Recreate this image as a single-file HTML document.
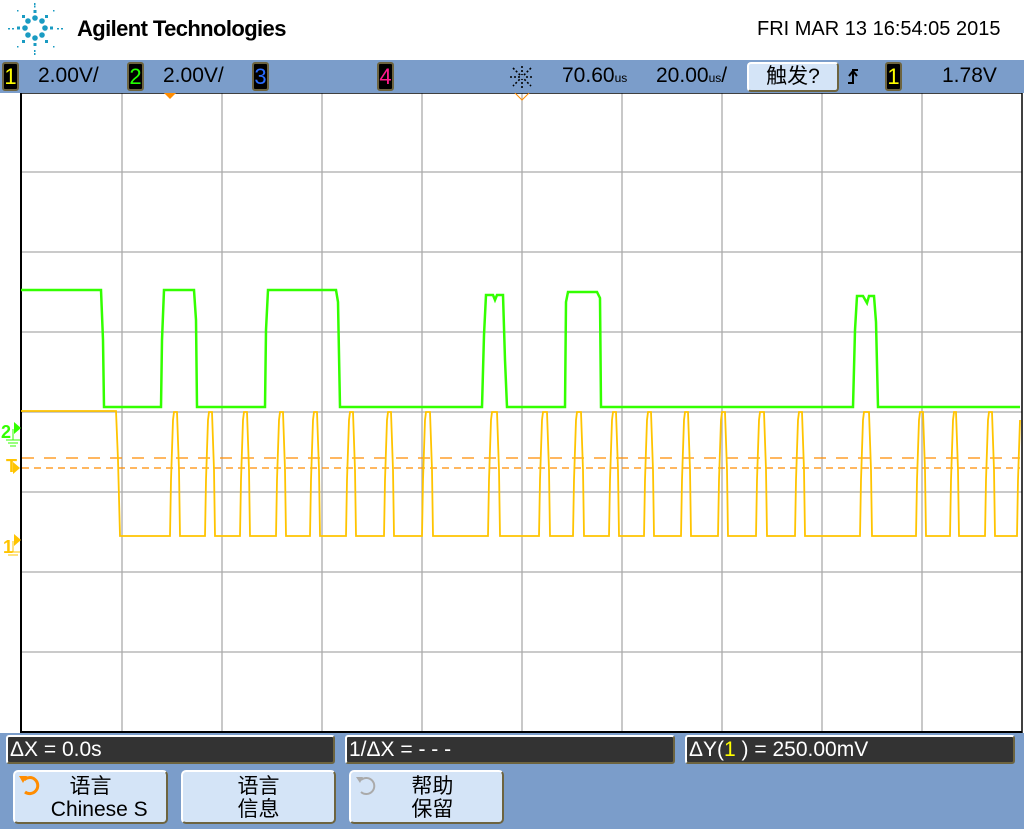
<!DOCTYPE html>
<html><head><meta charset="utf-8"><style>
*{margin:0;padding:0;box-sizing:border-box}
body{width:1024px;height:829px;overflow:hidden;background:#fff;font-family:"Liberation Sans","Noto Sans CJK SC",sans-serif;position:relative}
.a{position:absolute}
.bar{left:0;top:60px;width:1024px;height:33px;background:#7b9dca}
.ch{position:absolute;top:62px;width:17px;height:29px;background:#000;border:2px solid #6d6440;border-radius:3px;font-size:22px;line-height:25px;text-align:center}
.t{position:absolute;font-size:21px;color:#000;top:63px;line-height:26px}
.bot{left:0;top:733px;width:1024px;height:96px;background:#7b9dca}
.box{position:absolute;top:735px;height:29px;background:#333;border:2px solid #6d6440;border-left-color:#fff;border-top-color:#fff;border-radius:3px;color:#fff;font-size:21px;line-height:25px;padding-left:2px}
.btn{position:absolute;top:770px;width:155px;height:54px;background:#d4e4f7;border:2px solid #6d6440;border-left-color:#fff;border-top-color:#fff;border-radius:5px;font-size:21px;line-height:23px;text-align:center;padding-top:3px}
</style></head><body>
<svg class="a" style="left:0;top:0" width="80" height="60">
<g fill="#1a9bc2">
<circle cx="35" cy="18" r="2.8"/><circle cx="35" cy="38" r="2.8"/><circle cx="25" cy="28" r="2.8"/><circle cx="45" cy="28" r="2.8"/>
<circle cx="28" cy="21" r="2.8"/><circle cx="42" cy="21" r="2.8"/><circle cx="28" cy="35" r="2.8"/><circle cx="42" cy="35" r="2.8"/>
<rect x="33.5" y="10" width="3" height="3"/><rect x="33.5" y="43" width="3" height="3"/><rect x="17" y="26.5" width="3" height="3"/><rect x="50" y="26.5" width="3" height="3"/>
<rect x="22" y="15" width="3" height="3"/><rect x="45" y="15" width="3" height="3"/><rect x="22" y="40" width="3" height="3"/><rect x="45" y="40" width="3" height="3"/>
<rect x="34" y="3" width="1.5" height="2"/><rect x="34" y="5.5" width="1.5" height="2"/><rect x="34" y="50" width="1.5" height="2"/><rect x="34" y="53" width="1.5" height="2"/><rect x="8" y="28" width="2" height="1.5"/><rect x="12" y="28" width="2" height="1.5"/><rect x="57" y="28" width="2" height="1.5"/><rect x="61" y="28" width="2" height="1.5"/>
<rect x="17" y="10" width="1.5" height="1.5"/><rect x="53" y="10" width="1.5" height="1.5"/><rect x="17" y="46" width="1.5" height="1.5"/><rect x="53" y="46" width="1.5" height="1.5"/>
</g></svg>
<div class="a" style="left:77px;top:16px;font-size:22px;font-weight:bold;letter-spacing:-0.6px">Agilent Technologies</div>
<div class="a" style="left:757px;top:18px;font-size:20px">FRI MAR 13 16:54:05 2015</div>
<div class="a bar"></div>
<div class="ch" style="left:2px;color:#ffff00">1</div>
<div class="t" style="left:38px">2.00V/</div>
<div class="ch" style="left:127px;color:#22ff00">2</div>
<div class="t" style="left:163px">2.00V/</div>
<div class="ch" style="left:252px;color:#2a6cff">3</div>
<div class="ch" style="left:377px;color:#ff1a8c">4</div>
<svg class="a" style="left:509px;top:65px" width="26" height="24"><g stroke="#000" stroke-width="1.6" stroke-dasharray="2,2"><path d="M13,1V23M1,12H25M4,3L22,21M22,3L4,21"/></g><circle cx="13" cy="12" r="2" fill="#7b9dca"/></svg>
<div class="t" style="left:562px">70.60<span style="font-size:12px">us</span></div>
<div class="t" style="left:656px">20.00<span style="font-size:12px">us</span>/</div>
<div class="a" style="left:747px;top:62px;width:92px;height:30px;background:#d4e4f7;border:2px solid #6d6440;border-left-color:#fff;border-top-color:#fff;border-radius:4px;font-size:21px;text-align:center;line-height:26px">触发?</div>
<svg class="a" style="left:846px;top:66px" width="14" height="22"><path d="M2,17H7V4H12M3,10L7,5L11,10" stroke="#000" stroke-width="2" fill="none"/></svg>
<div class="ch" style="left:885px;color:#ffff00">1</div>
<div class="t" style="left:942px">1.78V</div>
<svg class="a" style="left:0;top:93px" width="1024" height="640">
<g stroke="#aaa" stroke-width="1.3">
<path d="M122,0V640M222,0V640M322,0V640M422,0V640M522,0V640M622,0V640M722,0V640M822,0V640M922,0V640"/>
<path d="M21,79H1022M21,159H1022M21,239H1022M21,319H1022M21,399H1022M21,479H1022M21,559H1022"/>
</g>
<path d="M21,0H1022V640" stroke="#000" stroke-width="1.5" fill="none"/>
<path d="M21,0V640" stroke="#000" stroke-width="2"/>
<path d="M21,639H1022" stroke="#000" stroke-width="2"/>
<path d="M164,0l6,6l6,-6z" fill="#ff8c00"/>
<path d="M515,0l7,7l7,-7" stroke="#ff8c00" fill="none"/>
</svg>
<svg class="a" style="left:0;top:0" width="1024" height="733">
<path d="M22,458H1020" stroke="#ff8c00" stroke-width="1.3" stroke-dasharray="12,10"/>
<path d="M22,468H1020" stroke="#ff8c00" stroke-width="1.3" stroke-dasharray="7,5"/>
<path fill="none" stroke="#33ff00" stroke-width="2.5" d="M21,290H101L103,340L104,407H161L162,340L164,290H194L196,320L197,407H265L266,330L268,290H336L338,302L340,407H482L484,335L486,295H493L495,300L497,295H503L505,360L507,407H565L566,302L568,292H597L600,298L601,407H853L855,330L857,296H863L867,303L869,296H874L876,322L878,407H1020"/>
<path fill="none" stroke="#ffc400" stroke-width="1.8" d="M21,411H116L118,460L120,536H170L171,480L173,420L174,412H177L179,470L180,536H205L206,480L208,420L209,412H212L214,470L215,536H240L241,480L243,420L244,412H247L249,470L250,536H276L277,480L279,420L280,412H283L285,470L286,536H310L311,480L313,420L314,412H317L319,470L320,536H346L347,480L349,420L350,412H353L355,470L356,536H384L385,480L387,420L388,412H391L393,470L394,536H422L423,480L425,420L426,412H430L432,470L433,536H488L489,480L491,420L492,412H497L499,470L500,536H539L540,480L542,420L543,412H547L549,470L550,536H573L574,480L576,420L577,412H581L583,470L584,536H609L610,480L612,420L613,412H616L618,470L619,536H644L645,480L647,420L648,412H651L653,470L654,536H681L682,480L684,420L685,412H688L690,470L691,536H718L719,480L721,420L722,412H725L727,470L728,536H756L757,480L759,420L760,412H764L766,470L767,536H795L796,480L798,420L799,412H802L804,470L805,536H860L861,480L863,420L864,412H869L871,470L872,536H916L917,480L919,420L920,412H923L925,470L926,536H950L951,480L953,420L954,412H956L958,470L959,536H985L986,480L988,420L989,412H992L994,470L995,536H1017L1018,480L1020,420"/>
<text x="1" y="438" fill="#33ff00" font-size="18" font-weight="bold" font-family="Liberation Sans">2</text>
<path d="M14,422l7,6l-7,6z" fill="#33ff00"/><path d="M13,429V440M6,440h14M8,443h10M10,446h6" stroke="#33ff00"/>
<text x="6" y="472" fill="#ffc400" font-size="18" font-weight="bold" font-family="Liberation Sans">T</text>
<path d="M13,462l7,6l-7,6z" fill="#ffc400"/>
<text x="3" y="553" fill="#ffc400" font-size="18" font-weight="bold" font-family="Liberation Sans">1</text>
<path d="M14,534l7,6l-7,6z" fill="#ffc400"/><path d="M13,541V552M6,552h14M8,555h10" stroke="#ffc400"/>
</svg>
<div class="a bot"></div>
<div class="box" style="left:6px;width:329px">ΔX = 0.0s</div>
<div class="box" style="left:345px;width:330px">1/ΔX = - - -</div>
<div class="box" style="left:685px;width:330px">ΔY(<span style="color:#ffff00">1</span> ) = 250.00mV</div>
<div class="btn" style="left:13px">语言<br>&nbsp;&nbsp;&nbsp;Chinese S</div>
<div class="btn" style="left:181px">语言<br>信息</div>
<div class="btn" style="left:349px">&nbsp;&nbsp;帮助<br>&nbsp;&nbsp;保留</div>
<svg class="a" style="left:16px;top:772px" width="30" height="26"><path d="M8,8A8,8 0 1 1 9,20" fill="none" stroke="#ff8c00" stroke-width="3"/><path d="M3,4l8,0l-4,7z" fill="#ff8c00"/></svg>
<svg class="a" style="left:352px;top:772px" width="30" height="26"><path d="M9,8A8,8 0 1 1 9,20" fill="none" stroke="#aaa" stroke-width="2"/><path d="M4,5l7,0l-3,6z" fill="#aaa"/></svg>
</body></html>
